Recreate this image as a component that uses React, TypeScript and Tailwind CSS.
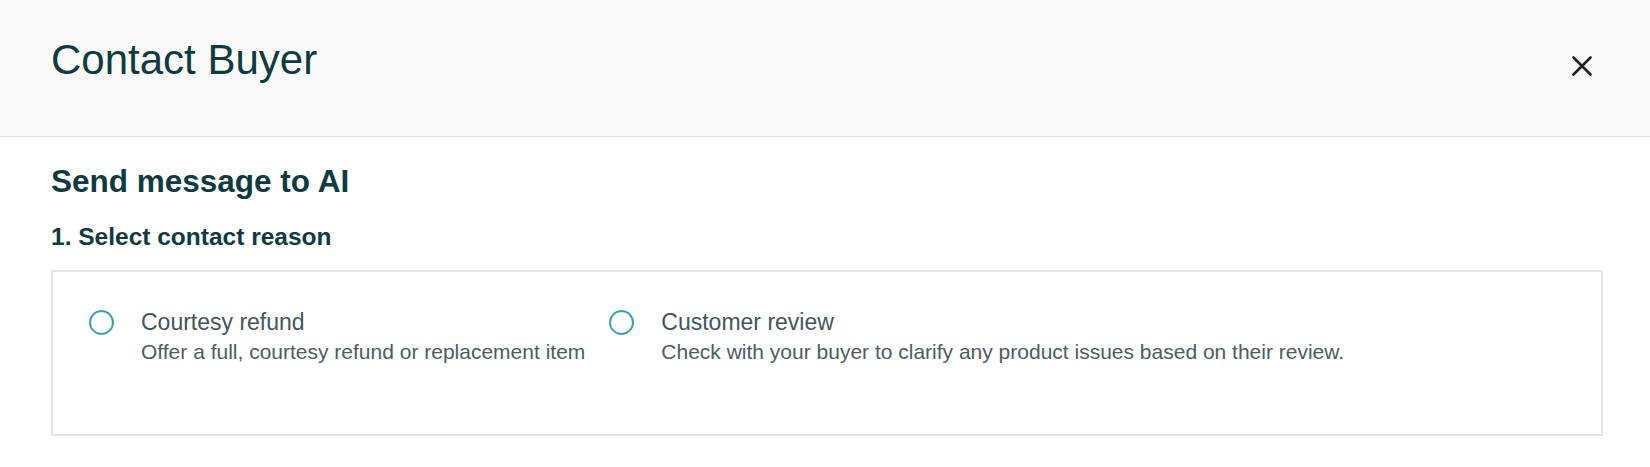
import React, { useState } from 'react';

interface Reason {
  id: string;
  title: string;
  description: string;
}

const reasons: Reason[] = [
  {
    id: 'courtesy-refund',
    title: 'Courtesy refund',
    description: 'Offer a full, courtesy refund or replacement item',
  },
  {
    id: 'customer-review',
    title: 'Customer review',
    description: 'Check with your buyer to clarify any product issues based on their review.',
  },
];

const CloseIcon: React.FC = () => (
  <svg width="20" height="20" viewBox="0 0 20 20" fill="none">
    <path d="M1.5 1.5 L18.5 18.5 M18.5 1.5 L1.5 18.5" stroke="#222222" strokeWidth="2.6" strokeLinecap="round" />
  </svg>
);

const App: React.FC = () => {
  const [selected, setSelected] = useState<string | null>(null);

  return (
    <div className="min-h-[467px] bg-white font-['Liberation_Sans',Arial,sans-serif]">
      {/* header */}
      <div className="h-[137px] bg-[#f9f9f9] border-b border-[#e0e4e4] flex justify-between items-start pl-[51px] pr-[58px]">
        <h1 className="mt-[35px] text-[42px] leading-[50px] text-[#0f3a3f]">Contact Buyer</h1>
        <button className="mt-[56px] w-5 h-5 flex items-center justify-center">
          <CloseIcon />
        </button>
      </div>

      <div className="pl-[51px] pr-[47px] pt-[26px]">
        <h2 className="text-[31.5px] leading-[36px] font-bold text-[#0f3a3f]">Send message to AI</h2>
        <h3 className="mt-[23px] text-[24.5px] leading-[30px] font-bold text-[#0f3a3f]">1. Select contact reason</h3>

        <div className="mt-[18px] border-2 border-[#e6e6e6] pl-[36px] pt-[35px] pb-[67px] flex gap-[24px]">
          {reasons.map((reason) => (
            <label
              key={reason.id}
              className="flex items-start gap-[27px] cursor-pointer"
              onClick={() => setSelected(reason.id)}
            >
              <span className="mt-[3px] w-[25px] h-[25px] rounded-full border-2 border-[#3ca2b0] flex items-center justify-center shrink-0">
                {selected === reason.id && <span className="w-[13px] h-[13px] rounded-full bg-[#3ca2b0]" />}
              </span>
              <span className="flex flex-col">
                <span className="text-[23px] leading-[30px] text-[#3f575b]">{reason.title}</span>
                <span className="text-[21px] leading-[30px] text-[#4a5e62]">{reason.description}</span>
              </span>
            </label>
          ))}
        </div>
      </div>
    </div>
  );
};

export default App;
